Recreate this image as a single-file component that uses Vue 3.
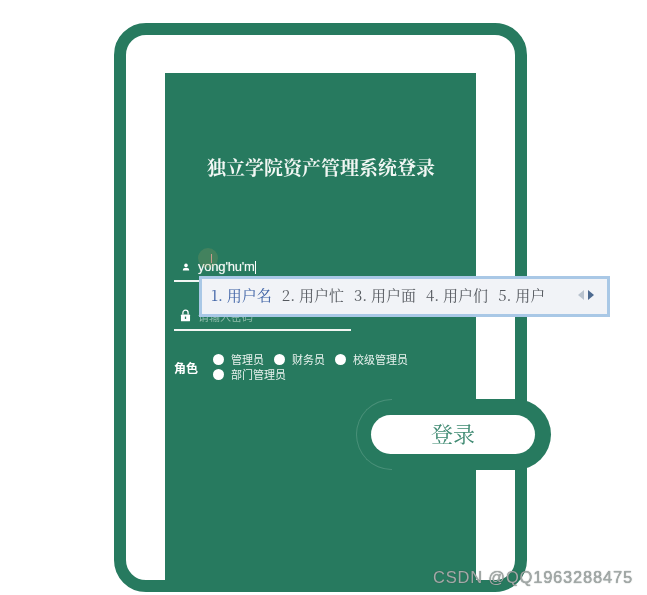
<script setup>
const candidates = ['用户名', '用户忙', '用户面', '用户们', '用户']
const roles = ['管理员', '财务员', '校级管理员', '部门管理员']
</script>

<template>
  <div class="page">
    <div class="frame">
      <div class="panel">
        <h1 class="title">独立学院资产管理系统登录</h1>
        <div class="field user">
          <svg class="ico-user" viewBox="0 0 8 8"><circle cx="4" cy="2.4" r="1.8" fill="#fff" /><path d="M.8 7.4c0-2 1.4-2.6 3.2-2.6s3.2.6 3.2 2.6z" fill="#fff" /></svg>
          <span class="typed">yong'hu'm</span><span class="caret"></span>
          <span class="halo"></span>
          <span class="ibeam"></span>
        </div>
        <div class="field pass">
          <svg class="ico-lock" viewBox="0 0 10 12"><path d="M2.6 5V3.4a2.4 2.4 0 0 1 4.8 0V5" fill="none" stroke="#fff" stroke-width="1.2" /><rect x=".8" y="5" width="8.4" height="6.4" rx=".8" fill="#fff" /><rect x="4.4" y="7" width="1.2" height="2.2" fill="#277a5f" /></svg>
          <span class="placeholder">请输入密码</span>
        </div>
        <div class="role">
          <span class="role-label">角色</span>
          <div class="role-list">
            <span v-for="r in roles" :key="r" class="role-item"><i class="dot"></i>{{ r }}</span>
          </div>
        </div>
      </div>
      <div class="login-ring">
        <div class="login-btn">登录</div>
      </div>
    </div>

    <div class="ime">
      <span v-for="(c, i) in candidates" :key="c" class="cand" :class="{ on: i === 0 }">{{ i + 1 }}. {{ c }}</span>
      <span class="arrows"><i class="arr left"></i><i class="arr right"></i></span>
    </div>
    <div class="mark">CSDN @QQ1963288475</div>
  </div>
</template>

<style scoped>
.page {
  position: relative;
  width: 647px;
  height: 595px;
  overflow: hidden;
  background: #fff;
  padding: 23px 0 0 114px;
  box-sizing: border-box;
  font-family: "Noto Sans CJK SC", "Liberation Sans", sans-serif;
  filter: blur(0.35px);
}
.frame {
  position: relative;
  width: 413px;
  height: 569px;
  box-sizing: border-box;
  border: 12px solid #277a5f;
  border-radius: 32px;
  padding: 38px 39px 0;
  display: flex;
}
.panel {
  flex: 1;
  background: #277a5f;
  color: #fff;
  display: flex;
  flex-direction: column;
  padding: 0 0 0 9px;
}
.title {
  margin: 80px 0 0;
  text-align: center;
  padding-right: 8px;
  font-size: 19px;
  line-height: 28px;
  font-weight: 700;
  font-family: "Noto Serif CJK SC", "Noto Sans CJK SC", serif;
  color: #f2f7f4;
}
.field {
  position: relative;
  display: flex;
  align-items: center;
  border-bottom: 2px solid #f1f6f3;
  box-sizing: border-box;
  height: 30px;
}
.user {
  margin-top: 71px;
  width: 100px;
  padding-top: 2px;
}
.pass {
  margin-top: 14px;
  width: 177px;
  height: 35px;
  padding-top: 6px;
}
.ico-user {
  width: 8px;
  height: 8px;
  margin: 0 8px 0 8px;
}
.ico-lock {
  width: 11px;
  height: 13px;
  margin: 0 7px 0 6px;
}
.typed {
  font: 13px/16px "Liberation Sans", sans-serif;
  letter-spacing: -0.2px;
  color: #f4f8f6;
  text-shadow: 0 0 1px rgba(255, 255, 255, 0.6);
}
.caret {
  width: 1px;
  height: 13px;
  background: #fff;
}
.halo {
  position: absolute;
  left: 24px;
  top: -4px;
  width: 20px;
  height: 20px;
  border-radius: 50%;
  background: rgba(170, 160, 90, 0.22);
}
.ibeam {
  position: absolute;
  left: 37px;
  top: 2px;
  width: 1px;
  height: 9px;
  background: #c99a8c;
}
.placeholder {
  font-size: 11px;
  color: #8fbcab;
}
.role {
  display: flex;
  align-items: center;
  margin-top: 21px;
}
.role-label {
  font-size: 12px;
  font-weight: 700;
  width: 39px;
  flex: none;
}
.role-list {
  display: flex;
  flex-wrap: wrap;
  width: 210px;
  font-size: 11px;
  line-height: 15px;
  color: #e9f2ee;
}
.role-item {
  display: flex;
  align-items: center;
  margin-right: 10px;
}
.dot {
  width: 11px;
  height: 11px;
  border-radius: 50%;
  background: #fff;
  margin-right: 7px;
}
.login-ring {
  position: absolute;
  left: 230px;
  top: 364px;
  width: 195px;
  height: 71px;
  box-sizing: border-box;
  border-radius: 36px;
  background: #277a5f;
  display: flex;
  align-items: center;
  justify-content: center;
}
.login-ring::before {
  content: "";
  position: absolute;
  left: 0;
  top: 0;
  width: 36px;
  height: 100%;
  box-sizing: border-box;
  border: 1px solid #4a9079;
  border-right: none;
  border-radius: 36px 0 0 36px;
}
.login-btn {
  width: 164px;
  height: 39px;
  margin-left: -1px;
  border-radius: 20px;
  background: #fff;
  color: #3f8a72;
  font: 400 22px/36px "Noto Serif CJK SC", "Noto Sans CJK SC", serif;
  text-align: center;
}
.ime {
  position: absolute;
  left: 199px;
  top: 276px;
  width: 411px;
  height: 41px;
  box-sizing: border-box;
  border: 3px solid #a9c8e6;
  background: #f1f3f7;
  display: flex;
  align-items: center;
  padding: 0 0 3px 9px;
  gap: 10px;
  font: 15px/20px "Noto Serif CJK SC", "Noto Sans CJK SC", serif;
  color: #55595f;
}
.cand.on {
  color: #3f63a6;
}
.arrows {
  display: flex;
  gap: 4px;
  margin-left: auto;
  margin-right: 13px;
}
.arr {
  width: 0;
  height: 0;
  border-top: 5px solid transparent;
  border-bottom: 5px solid transparent;
}
.arr.left {
  border-right: 6px solid #b9c3cf;
}
.arr.right {
  border-left: 6px solid #4d6a90;
}
.mark {
  position: absolute;
  left: 433px;
  top: 567px;
  font: 16.5px/20px "Liberation Sans", sans-serif;
  letter-spacing: 0.8px;
  color: #a3aaa8;
  text-shadow: 0 0 1px rgba(60, 70, 68, 0.8);
}
</style>
